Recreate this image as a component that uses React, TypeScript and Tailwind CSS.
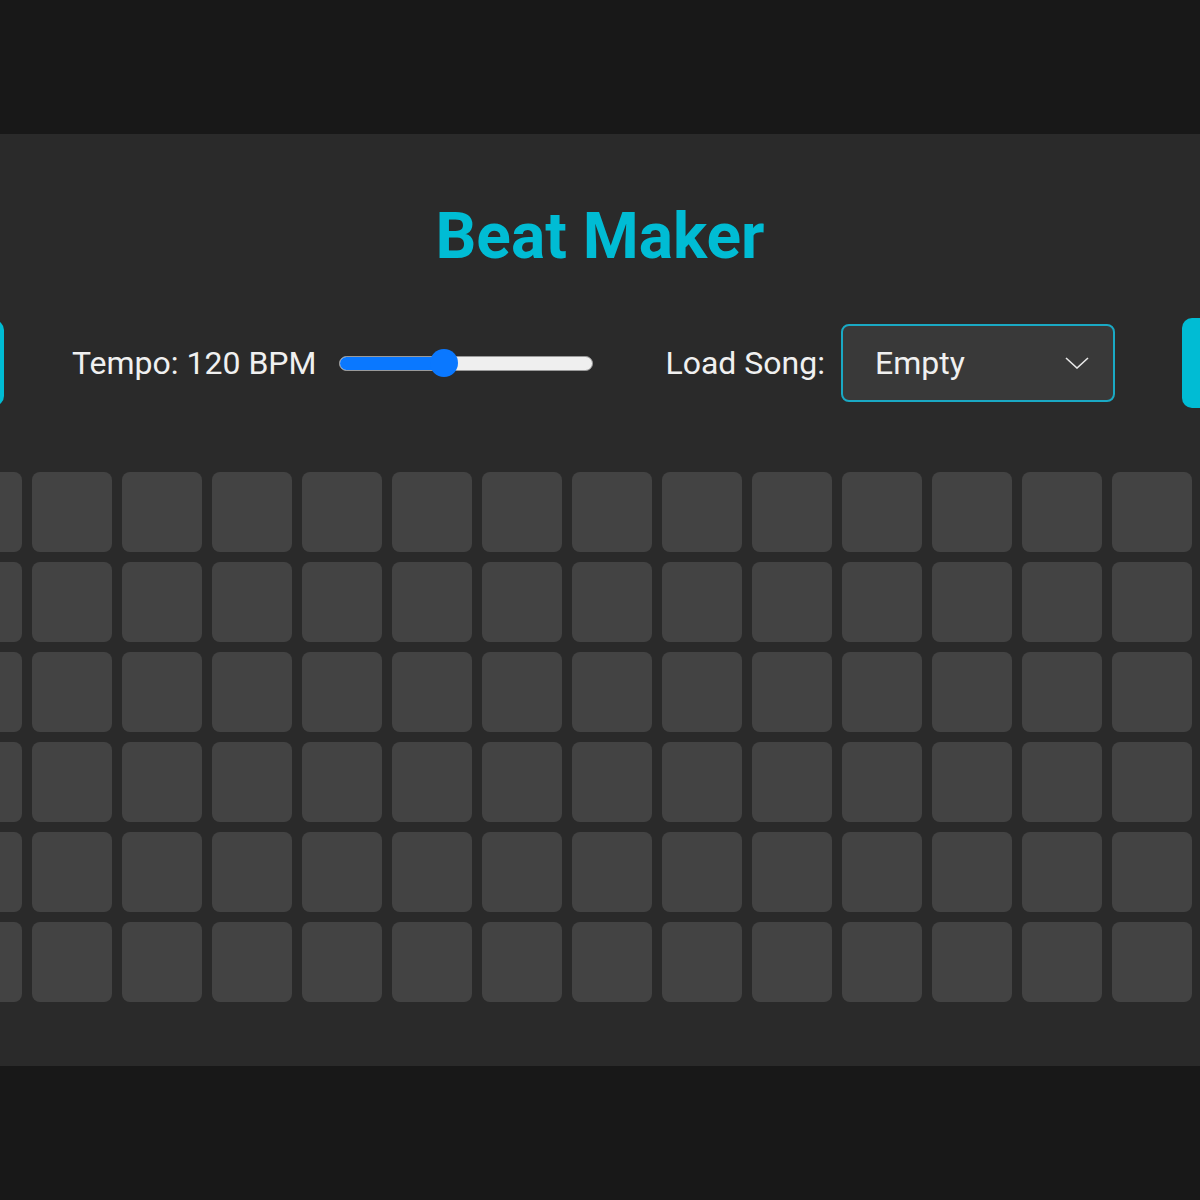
import { useState } from 'react';

const rows = ['kick', 'snare', 'hihat', 'openhat', 'clap', 'tom'];
const steps = Array.from({ length: 16 }, (_, i) => i);

export default function App() {
    const [tempo] = useState(120);
    // same thumb placement as a native range input (thumb stays inside the track)
    const frac = (tempo - 40) / 200;
    const thumbLeft = frac * (254 - 28);

    return (
        <div className="w-full h-[1200px] bg-[#181818] overflow-hidden flex flex-col justify-center items-center font-['Roboto',sans-serif]">
            {/* Panel */}
            <div className="shrink-0 w-[1640px] h-[932px] bg-[#2a2a2a] rounded-xl flex flex-col items-center pt-[71px]">
                <h1 className="text-[64px] leading-none font-bold text-[#00bcd4]">Beat Maker</h1>

                {/* Controls */}
                <div className="mt-[49px] h-[90px] flex items-center">
                    <button aria-label="Play" className="w-[150px] h-[86px] rounded-[10px] bg-[#00bcd4]" />

                    <div className="ml-[68px] flex items-center gap-[23px]">
                        <span className="text-[32px] text-[#f0f0f0]">Tempo: {tempo} BPM</span>
                        <div className="relative w-[254px] h-[28px] flex items-center">
                            <div className="w-full h-[15px] rounded-full bg-[#efefef] border border-[#9a9a9a] overflow-hidden">
                                <div className="h-full bg-[#0a78ff]" style={{ width: thumbLeft + 14 }} />
                            </div>
                            <div
                                className="absolute top-0 w-[28px] h-[28px] rounded-full bg-[#0a78ff]"
                                style={{ left: thumbLeft }}
                            />
                        </div>
                    </div>

                    <div className="ml-[72px] flex items-center gap-[16px]">
                        <span className="text-[32px] text-[#f0f0f0]">Load Song:</span>
                        <div className="w-[274px] h-[78px] rounded-[8px] border-2 border-[#1aa9c4] bg-[#393939] flex items-center justify-between pl-[32px] pr-[24px]">
                            <span className="text-[32px] text-[#f0f0f0]">Empty</span>
                            <svg width="24" height="12" viewBox="0 0 24 12" fill="none" stroke="#e8e8e8" strokeWidth="1.6">
                                <path d="M1 1l11 10L23 1" />
                            </svg>
                        </div>
                    </div>

                    <button aria-label="Clear" className="ml-[67px] w-[164px] h-[90px] rounded-[10px] bg-[#00bcd4]" />
                </div>

                {/* Sequencer grid */}
                <div className="mt-[64px] flex flex-col gap-[10px]">
                    {rows.map((r) => (
                        <div key={r} className="flex gap-[10px]">
                            <div className="w-[104px] h-[80px]" />
                            {steps.map((s) => (
                                <div key={s} className="w-[80px] h-[80px] rounded-[8px] bg-[#434343]" />
                            ))}
                        </div>
                    ))}
                </div>
            </div>
        </div>
    );
}
